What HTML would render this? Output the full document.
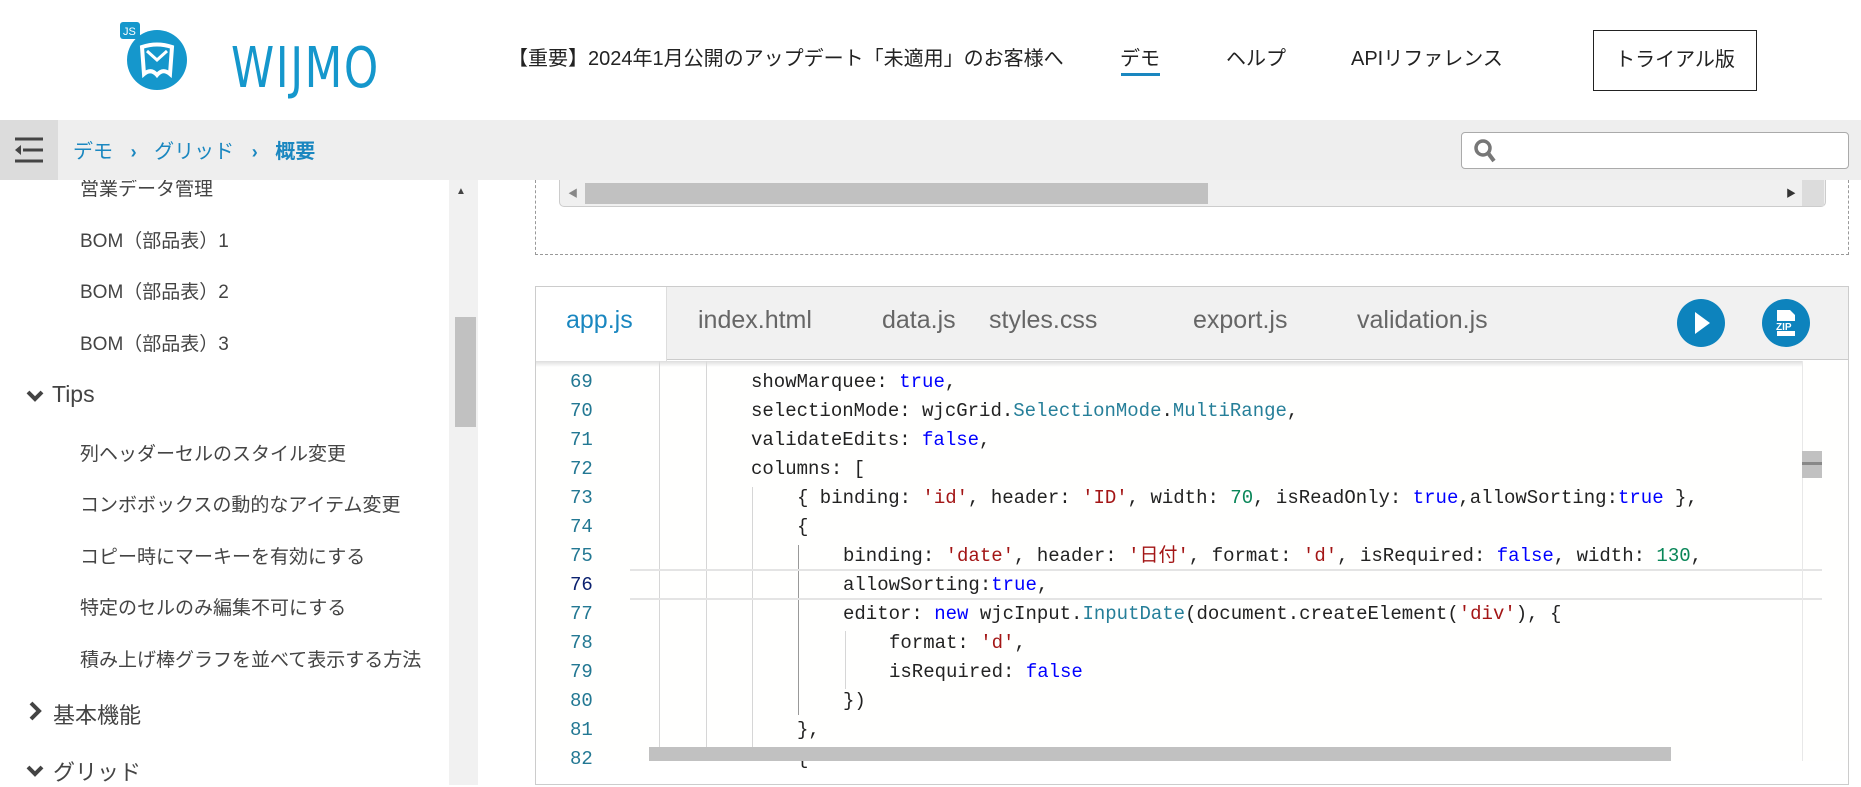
<!DOCTYPE html>
<html><head><meta charset="utf-8"><style>
*{margin:0;padding:0;box-sizing:border-box}
body{width:1861px;height:785px;overflow:hidden;background:#fff;position:relative;font-family:"Liberation Sans","Noto Sans CJK JP",sans-serif;color:#333}
.a{position:absolute;white-space:nowrap}
.nav{font-size:20px;color:#222;top:42px}
.side{font-size:19px;color:#444;left:80px}
.tab{font-size:25px;color:#666;top:306px}
.code{font-family:"Liberation Mono","Noto Sans CJK JP",monospace;font-size:19px;color:#222;line-height:22px;height:22px}
.ln{font-family:"Liberation Mono",monospace;font-size:19px;color:#237893;left:570px;line-height:22px}
.k{color:#0000ff}.s{color:#a31515}.n{color:#098658}.t{color:#267f99}
.g{position:absolute;width:1px;background:#d6d6d6}
</style></head><body>
<!-- sidebar -->
<div class="a side" style="top:174px">営業データ管理</div>
<div class="a side" style="top:226px">BOM（部品表）1</div>
<div class="a side" style="top:277px">BOM（部品表）2</div>
<div class="a side" style="top:329px">BOM（部品表）3</div>
<svg class="a" style="left:26px;top:390px" width="18" height="12"><path d="M2 2 L9 9 L16 2" fill="none" stroke="#444" stroke-width="4"/></svg>
<div class="a" style="left:52px;top:381px;font-size:23px;color:#444">Tips</div>
<div class="a side" style="top:439px">列ヘッダーセルのスタイル変更</div>
<div class="a side" style="top:490px">コンボボックスの動的なアイテム変更</div>
<div class="a side" style="top:542px">コピー時にマーキーを有効にする</div>
<div class="a side" style="top:593px">特定のセルのみ編集不可にする</div>
<div class="a side" style="top:645px">積み上げ棒グラフを並べて表示する方法</div>
<svg class="a" style="left:28px;top:701px" width="14" height="20"><path d="M3 2 L11 10 L3 18" fill="none" stroke="#444" stroke-width="4"/></svg>
<div class="a" style="left:53px;top:698px;font-size:22px;color:#444">基本機能</div>
<svg class="a" style="left:26px;top:765px" width="18" height="12"><path d="M2 2 L9 9 L16 2" fill="none" stroke="#444" stroke-width="4"/></svg>
<div class="a" style="left:53px;top:755px;font-size:22px;color:#444">グリッド</div>
<div class="a" style="left:449px;top:180px;width:29px;height:605px;background:#f1f1f1"></div>
<div class="a" style="left:456px;top:186px;font-size:10px;color:#444">▲</div>
<div class="a" style="left:455px;top:317px;width:21px;height:110px;background:#c1c1c1"></div>
<!-- header -->
<svg class="a" style="left:118px;top:20px" width="74" height="70" viewBox="0 0 74 70">
<circle cx="39" cy="40" r="30" fill="#1597cc"/>
<rect x="2" y="2" width="20" height="17" rx="3" fill="#1597cc"/>
<text x="5" y="15" font-size="11" fill="#fff" font-family="Liberation Sans">JS</text>
<path d="M24 27 Q39 22 54 27 L52 54 Q45 48 39 55 Q33 48 26 54 Z" fill="none" stroke="#fff" stroke-width="4"/>
<path d="M29 31 L39 40 L49 31" fill="none" stroke="#fff" stroke-width="3"/>
</svg>
<div class="a" style="left:231px;top:36px;font-size:56px;color:#1597cc;transform:scaleX(0.78);transform-origin:left;font-family:'DejaVu Sans',sans-serif;letter-spacing:2px">WIJMO</div>
<div class="a nav" style="left:508px">【重要】2024年1月公開のアップデート「未適用」のお客様へ</div>
<div class="a nav" style="left:1120px">デモ</div>
<div class="a" style="left:1121px;top:73px;width:39px;height:3px;background:#1a87c0"></div>
<div class="a nav" style="left:1226px">ヘルプ</div>
<div class="a nav" style="left:1351px">APIリファレンス</div>
<div class="a" style="left:1593px;top:30px;width:164px;height:61px;border:1px solid #222;font-size:20px;color:#222;text-align:center;line-height:59px">トライアル版</div>
<!-- breadcrumb -->
<div class="a" style="left:0;top:120px;width:1861px;height:60px;background:#eeeeee"></div>
<div class="a" style="left:0;top:120px;width:58px;height:60px;background:#dcdcdc"></div>
<svg class="a" style="left:13px;top:137px" width="32" height="26"><g stroke="#444" stroke-width="3"><line x1="2" y1="2" x2="30" y2="2"/><line x1="10" y1="13" x2="30" y2="13"/><line x1="2" y1="24" x2="30" y2="24"/></g><path d="M2 13 L8 8 L8 18 Z" fill="#444"/></svg>
<div class="a" style="left:73px;top:135px;font-size:20px;color:#1a87c0">デモ <b style="margin:0 12px;font-size:18px">›</b> グリッド <b style="margin:0 12px;font-size:18px">›</b> <b>概要</b></div>
<div class="a" style="left:1461px;top:132px;width:388px;height:37px;background:#fff;border:1px solid #aaa;border-radius:4px"></div>
<svg class="a" style="left:1473px;top:138px" width="24" height="26"><circle cx="10" cy="10" r="7" fill="none" stroke="#777" stroke-width="3.5"/><line x1="15" y1="15" x2="21" y2="23" stroke="#777" stroke-width="4"/></svg>
<!-- demo box -->
<div class="a" style="left:535px;top:180px;width:1314px;height:75px;border:1px dashed #999;border-top:none"></div>
<div class="a" style="left:559px;top:180px;width:1267px;height:27px;background:#f0f0f0;border:1px solid #ccc;border-top:none;border-radius:0 0 5px 5px"></div>
<div class="a" style="left:585px;top:183px;width:623px;height:21px;background:#c1c1c1"></div>
<div class="a" style="left:1802px;top:180px;width:22px;height:26px;background:#dcdcdc"></div>
<div class="a" style="left:568px;top:185px;font-size:10px;color:#888">◀</div>
<div class="a" style="left:1786px;top:185px;font-size:10px;color:#333">▶</div>
<!-- code panel -->
<div class="a" style="left:535px;top:286px;width:1314px;height:499px;border:1px solid #ccc;background:#fff"></div>
<div class="a" style="left:536px;top:287px;width:1312px;height:73px;background:#f1f1f1;border-bottom:1px solid #ccc"></div>
<div class="a" style="left:536px;top:287px;width:131px;height:74px;background:#fff;border-right:1px solid #ddd"></div>
<div class="a tab" style="left:566px;color:#1a87c0">app.js</div>
<div class="a tab" style="left:698px">index.html</div>
<div class="a tab" style="left:882px">data.js</div>
<div class="a tab" style="left:989px">styles.css</div>
<div class="a tab" style="left:1193px">export.js</div>
<div class="a tab" style="left:1357px">validation.js</div>
<svg class="a" style="left:1677px;top:299px" width="48" height="48"><circle cx="24" cy="24" r="24" fill="#0d83bd"/><path d="M18 13 L33 24 L18 35 Z" fill="#fff"/></svg>
<svg class="a" style="left:1762px;top:299px" width="48" height="48"><circle cx="24" cy="24" r="24" fill="#0d83bd"/><path d="M15 11 H28 L33 16 V37 H15 Z" fill="#fff"/><rect x="13" y="22" width="22" height="10" fill="#0d83bd"/><text x="14" y="31" font-size="10" font-weight="bold" fill="#fff" font-family="Liberation Sans">ZIP</text></svg>
<!-- code area -->
<div class="a" style="left:536px;top:361px;width:1312px;height:400px;overflow:hidden;background:#fffffe">
<div class="g" style="left:123px;top:0;height:400px"></div>
<div class="g" style="left:170px;top:0;height:400px"></div>
<div class="g" style="left:216px;top:126px;height:280px"></div>
<div class="g" style="left:262px;top:184px;height:170px;background:#999"></div>
<div class="g" style="left:309px;top:270px;height:58px"></div>
<div class="a" style="left:94px;top:208px;width:1192px;height:2px;background:#e4e4e4"></div>
<div class="a" style="left:94px;top:237px;width:1192px;height:2px;background:#e4e4e4"></div>
<div class="a" style="left:1266px;top:0;width:1px;height:400px;background:#e8e8e8"></div>
<div class="a" style="left:1266px;top:90px;width:20px;height:27px;background:#c1c1c1"></div>
<div class="a" style="left:1266px;top:101px;width:20px;height:3px;background:#888"></div>
</div>
<div class="a" style="left:536px;top:361px;width:1266px;height:6px;background:linear-gradient(#ddd,rgba(255,255,255,0))"></div>
<div class="a ln" style="top:371px">69</div><div class="a code" style="left:751px;top:371px">showMarquee: <span class="k">true</span>,</div>
<div class="a ln" style="top:400px">70</div><div class="a code" style="left:751px;top:400px">selectionMode: wjcGrid.<span class="t">SelectionMode</span>.<span class="t">MultiRange</span>,</div>
<div class="a ln" style="top:429px">71</div><div class="a code" style="left:751px;top:429px">validateEdits: <span class="k">false</span>,</div>
<div class="a ln" style="top:458px">72</div><div class="a code" style="left:751px;top:458px">columns: [</div>
<div class="a ln" style="top:487px">73</div><div class="a code" style="left:797px;top:487px">{ binding: <span class="s">'id'</span>, header: <span class="s">'ID'</span>, width: <span class="n">70</span>, isReadOnly: <span class="k">true</span>,allowSorting:<span class="k">true</span> },</div>
<div class="a ln" style="top:516px">74</div><div class="a code" style="left:797px;top:516px">{</div>
<div class="a ln" style="top:545px">75</div><div class="a code" style="left:843px;top:545px">binding: <span class="s">'date'</span>, header: <span class="s">'日付'</span>, format: <span class="s">'d'</span>, isRequired: <span class="k">false</span>, width: <span class="n">130</span>,</div>
<div class="a ln" style="top:574px;color:#0b216f">76</div><div class="a code" style="left:843px;top:574px">allowSorting:<span class="k">true</span>,</div>
<div class="a ln" style="top:603px">77</div><div class="a code" style="left:843px;top:603px">editor: <span class="k">new</span> wjcInput.<span class="t">InputDate</span>(document.createElement(<span class="s">'div'</span>), {</div>
<div class="a ln" style="top:632px">78</div><div class="a code" style="left:889px;top:632px">format: <span class="s">'d'</span>,</div>
<div class="a ln" style="top:661px">79</div><div class="a code" style="left:889px;top:661px">isRequired: <span class="k">false</span></div>
<div class="a ln" style="top:690px">80</div><div class="a code" style="left:843px;top:690px">})</div>
<div class="a ln" style="top:719px">81</div><div class="a code" style="left:797px;top:719px">},</div>
<div class="a ln" style="top:748px">82</div><div class="a code" style="left:797px;top:748px">{</div>
<div class="a" style="left:649px;top:747px;width:1022px;height:14px;background:#c1c1c1"></div>
</body></html>
